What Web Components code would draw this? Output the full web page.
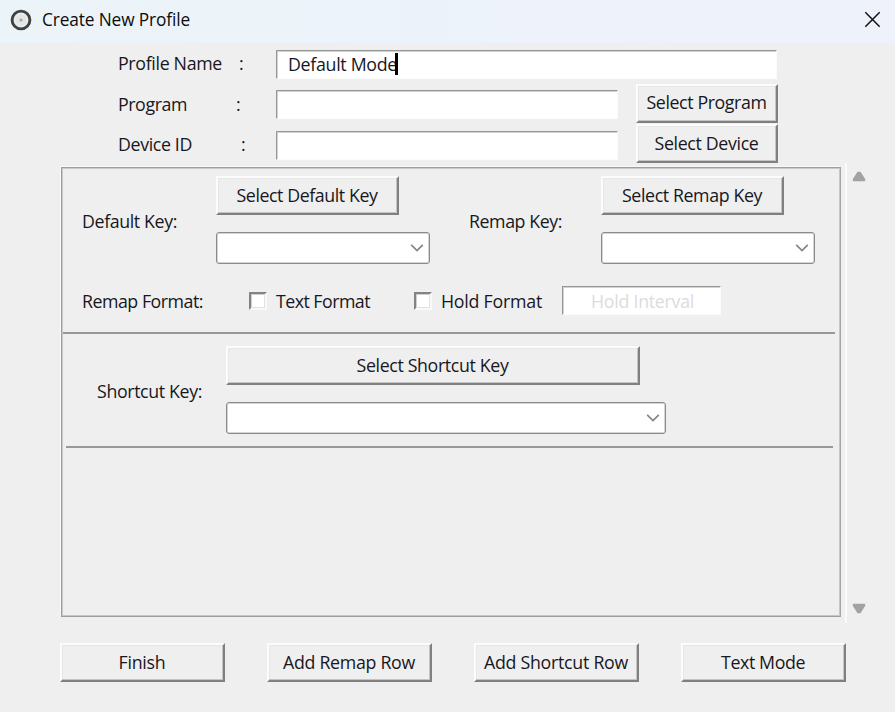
<!DOCTYPE html>
<html lang="en">
<head>
<meta charset="utf-8">
<title>Create New Profile</title>
<style>
  html, body {
    margin: 0;
    height: 100%;
    overflow: hidden;
    background: #efefef;
    font-family: "Open Sans", "Noto Sans", sans-serif;
    font-size: 17.8px;
    line-height: 24px;
    color: #17171d;
  }
</style>
</head>
<body>
<profile-dialog></profile-dialog>
<script>
// Base class: opens the shadow root and fills it with styles + markup
class BaseElement extends HTMLElement {
  connectedCallback() {
    if (this.shadowRoot) return;
    this.attachShadow({ mode: "open" });
    this.shadowRoot.innerHTML = `<style>${this.constructor.styles}</style>${this.render()}`;
    this.init();
  }

  init() {}
}

// Single line of text, tracked so that it takes the given width
class FitText extends BaseElement {
  static get styles() {
    return /* css */`
      :host {
        display: block;
        flex: none;
        white-space: pre;
      }
      span {
        display: inline-block;
        vertical-align: top;
      }
    `;
  }

  init() {
    const width = Number(this.getAttribute("width"));
    if (!width) return;
    const span = this.shadowRoot.querySelector("span");
    const natural = span.getBoundingClientRect().width;
    const count = this.textContent.length;
    span.style.letterSpacing = `${(width - natural) / count}px`;
    this.style.width = `${width}px`;
  }

  render() {
    return /* html */`<span><slot></slot></span>`;
  }
}

class PushButton extends BaseElement {
  static get styles() {
    return /* css */`
      :host {
        display: block;
        flex: none;
        box-sizing: border-box;
        height: 39px;
      }
      .button {
        box-sizing: border-box;
        height: 100%;
        display: flex;
        justify-content: center;
        align-items: center;
        padding: 0 1px 2px 0;
        border: 2px solid;
        border-color: #fcfcfc #808080 #808080 #fcfcfc;
        box-shadow: inset -1px -1px #c4c4c4, inset 1px 1px #e7e7e7;
      }
    `;
  }

  render() {
    return /* html */`
      <div class="button">
        <fit-text width="${this.getAttribute("text-width")}">${this.getAttribute("label")}</fit-text>
      </div>`;
  }
}

class TextField extends BaseElement {
  static get styles() {
    return /* css */`
      :host {
        display: block;
        flex: none;
        box-sizing: border-box;
        height: 29px;
      }
      .field {
        box-sizing: border-box;
        height: 100%;
        display: flex;
        align-items: center;
        background: #fff;
        border: 1px solid;
        border-color: #979797 #fbfbfb #fbfbfb #979797;
        box-shadow: inset 1px 1px #d2d2d2;
      }
      :host([disabled]) .field {
        color: #dcdcdc;
      }
    `;
  }

  render() {
    return /* html */`<div class="field"><slot></slot></div>`;
  }
}

class ComboBox extends BaseElement {
  static get styles() {
    return /* css */`
      :host {
        display: block;
        flex: none;
      }
      .combo {
        box-sizing: border-box;
        height: 32px;
        display: flex;
        justify-content: flex-end;
        align-items: center;
        padding-right: 5px;
        background: #fff;
        border: 1px solid #8a8a8a;
        border-radius: 3px;
        box-shadow: inset 0 0 0 1px #d6d6d6;
      }
      svg {
        display: block;
      }
    `;
  }

  render() {
    return /* html */`
      <div class="combo">
        <svg width="14" height="10" viewBox="0 0 14 10">
          <path d="M1.2 1.8 L7 7.5 L12.8 1.8" fill="none" stroke="#858585" stroke-width="1.7"></path>
        </svg>
      </div>`;
  }
}

class CheckBox extends BaseElement {
  static get styles() {
    return /* css */`
      :host {
        display: flex;
        align-items: center;
        gap: 9px;
      }
      .box {
        box-sizing: border-box;
        width: 18px;
        height: 18px;
        background: #fff;
        border: 2px solid;
        border-color: #838383 #f9f9f9 #f9f9f9 #838383;
        box-shadow: inset -1px -1px #e2e2e2, inset 1px 1px #cfcfcf;
      }
    `;
  }

  render() {
    return /* html */`<div class="box"></div><slot></slot>`;
  }
}

class TitleBar extends BaseElement {
  static get styles() {
    return /* css */`
      :host {
        display: flex;
        align-items: center;
        box-sizing: border-box;
        height: 43px;
        padding: 0 14px 4px 10px;
        background: linear-gradient(90deg, #ebf4f8, #edf2fb 60%, #eff2fa);
        font-size: 17.3px;
        color: #0b0b0b;
      }
      .title {
        flex: 1;
        margin-left: 10px;
      }
      svg {
        display: block;
      }
    `;
  }

  render() {
    return /* html */`
      <svg width="22" height="22" viewBox="0 0 22 22">
        <circle cx="11" cy="11" r="8.9" fill="#ececec" stroke="#3f4143" stroke-width="2.9"></circle>
        <circle cx="11" cy="11" r="5.6" fill="#e3e5e6"></circle>
        <circle cx="11" cy="11" r="1.6" fill="#a5a8a9"></circle>
      </svg>
      <div class="title"><slot></slot></div>
      <svg width="17" height="17" viewBox="0 0 17 17">
        <path d="M1.3 1.3 L15.7 15.7 M15.7 1.3 L1.3 15.7" stroke="#111" stroke-width="1.5"></path>
      </svg>`;
  }
}

// Label, colon, field and an optional button
class ProfileRow extends BaseElement {
  static get styles() {
    return /* css */`
      :host {
        display: flex;
        align-items: center;
        height: 40.5px;
      }
      .name {
        display: flex;
        width: 158px;
        padding-bottom: 1px;
      }
      text-field {
        margin-top: 1px;
      }
    `;
  }

  render() {
    const gap = this.getAttribute("gap");
    return /* html */`
      <div class="name">
        <fit-text width="${this.getAttribute("text-width")}">${this.getAttribute("label")}</fit-text>
        <fit-text style="margin-left: ${gap}px">:</fit-text>
      </div>
      <text-field style="width: ${this.getAttribute("field-width")}px"><slot></slot></text-field>
      <slot name="action"></slot>`;
  }
}

class KeyPicker extends BaseElement {
  static get styles() {
    return /* css */`
      :host {
        display: flex;
        align-items: center;
      }
      .stack {
        display: flex;
        flex-direction: column;
        gap: 17px;
      }
      .label {
        width: var(--label-width);
        padding-top: 2px;
      }
      push-button {
        width: var(--button-width);
      }
      combo-box {
        width: var(--combo-width);
      }
    `;
  }

  render() {
    return /* html */`
      <div class="label"><slot></slot></div>
      <div class="stack">
        <push-button label="${this.getAttribute("button")}" text-width="${this.getAttribute("text-width")}"></push-button>
        <combo-box></combo-box>
      </div>`;
  }
}

class ScrollArrows extends BaseElement {
  static get styles() {
    return /* css */`
      :host {
        display: flex;
        flex-direction: column;
        justify-content: space-between;
      }
      svg {
        display: block;
      }
    `;
  }

  render() {
    return /* html */`
      <svg width="14" height="11" viewBox="0 0 14 11">
        <path d="M6 1.5 H8 L12.5 8.5 V9.5 H1.5 V8.5 Z" fill="#a2a2a2" stroke="#a2a2a2" stroke-width="1.5" stroke-linejoin="round"></path>
      </svg>
      <svg width="14" height="11" viewBox="0 0 14 11">
        <path d="M6 9.5 H8 L12.5 2.5 V1.5 H1.5 V2.5 Z" fill="#a2a2a2" stroke="#a2a2a2" stroke-width="1.5" stroke-linejoin="round"></path>
      </svg>`;
  }
}

class ProfileDialog extends BaseElement {
  static get styles() {
    return /* css */`
      :host {
        display: block;
        width: 895px;
        height: 712px;
        background: #efefef;
      }
      .rows {
        padding: 0.5px 0 0 118px;
      }
      .rows push-button {
        width: 142px;
        margin: 0 0 2px 18px;
      }
      .main {
        display: flex;
        height: 458px;
        margin-left: 61px;
      }
      .frame {
        box-sizing: border-box;
        width: 786px;
        padding: 1px 4px 3px 0;
        margin-top: -2px;
        border-right: 2px solid #fafafa;
      }
      .panel {
        box-sizing: border-box;
        width: 780px;
        height: 450px;
        margin-top: 3px;
        border: 1px solid #9d9d9d;
        border-right-color: #a5a5a5;
        box-shadow: -1px -1px #fafafa, inset 1px 1px #c9c9c9, inset -1px -1px #c6c6c6;
        padding: 1px;
      }
      .section {
        box-sizing: border-box;
        border-bottom: 2px solid #989898;
      }
      .remap {
        width: 772px;
        height: 165px;
        padding-top: 7px;
      }
      .pickers {
        display: flex;
        padding-left: 19px;
        gap: 39px;
      }
      .pickers key-picker {
        --label-width: 134px;
        --button-width: 183px;
        --combo-width: 214px;
      }
      .pickers key-picker + key-picker {
        --label-width: 132px;
      }
      .format {
        display: flex;
        align-items: center;
        margin-top: 22px;
        padding-left: 19px;
      }
      .shortcut {
        width: 767px;
        height: 114px;
        margin-left: 3px;
        padding: 12px 0 0 31px;
      }
      .shortcut key-picker {
        --label-width: 129px;
        --button-width: 414px;
        --combo-width: 440px;
      }
      scroll-arrows {
        height: 443px;
        margin: 6px 0 0 5px;
      }
      .caret {
        width: 3px;
        height: 22px;
        background: #000;
        margin-left: -2px;
      }
      .footer {
        display: flex;
        gap: 42px;
        padding: 20px 0 0 60px;
      }
      .footer push-button {
        width: 165px;
      }
    `;
  }

  render() {
    return /* html */`
    <title-bar><fit-text width="148">Create New Profile</fit-text></title-bar>
    <div class="rows">
      <profile-row label="Profile Name" text-width="104" gap="17" field-width="501">
        <fit-text width="109" style="margin-left: 11px">Default Mode</fit-text>
        <div class="caret"></div>
      </profile-row>
      <profile-row label="Program" text-width="69" gap="49" field-width="342">
        <push-button slot="action" label="Select Program" text-width="120"></push-button>
      </profile-row>
      <profile-row label="Device ID" text-width="74" gap="49" field-width="342">
        <push-button slot="action" label="Select Device" text-width="104"></push-button>
      </profile-row>
    </div>
    <div class="main">
      <div class="frame">
        <div class="panel">
          <div class="section remap">
            <div class="pickers">
              <key-picker button="Select Default Key" text-width="141">
                <fit-text width="95">Default Key:</fit-text>
              </key-picker>
              <key-picker button="Select Remap Key" text-width="140">
                <fit-text width="93">Remap Key:</fit-text>
              </key-picker>
            </div>
            <div class="format">
              <fit-text width="121">Remap Format:</fit-text>
              <check-box style="margin-left: 46px"><fit-text width="94">Text Format</fit-text></check-box>
              <check-box style="margin-left: 44px"><fit-text width="101">Hold Format</fit-text></check-box>
              <text-field disabled style="width: 159px; margin-left: 20px">
                <fit-text width="103" style="margin-left: 28px">Hold Interval</fit-text>
              </text-field>
            </div>
          </div>
          <div class="section shortcut">
            <key-picker button="Select Shortcut Key" text-width="152">
              <fit-text width="105">Shortcut Key:</fit-text>
            </key-picker>
          </div>
        </div>
      </div>
      <scroll-arrows></scroll-arrows>
    </div>
    <div class="footer">
      <push-button label="Finish" text-width="47"></push-button>
      <push-button label="Add Remap Row" text-width="132"></push-button>
      <push-button label="Add Shortcut Row" text-width="144"></push-button>
      <push-button label="Text Mode" text-width="84"></push-button>
    </div>`;
  }
}

customElements.define("fit-text", FitText);
customElements.define("push-button", PushButton);
customElements.define("text-field", TextField);
customElements.define("combo-box", ComboBox);
customElements.define("check-box", CheckBox);
customElements.define("title-bar", TitleBar);
customElements.define("profile-row", ProfileRow);
customElements.define("key-picker", KeyPicker);
customElements.define("scroll-arrows", ScrollArrows);
customElements.define("profile-dialog", ProfileDialog);
</script>
</body>
</html>
